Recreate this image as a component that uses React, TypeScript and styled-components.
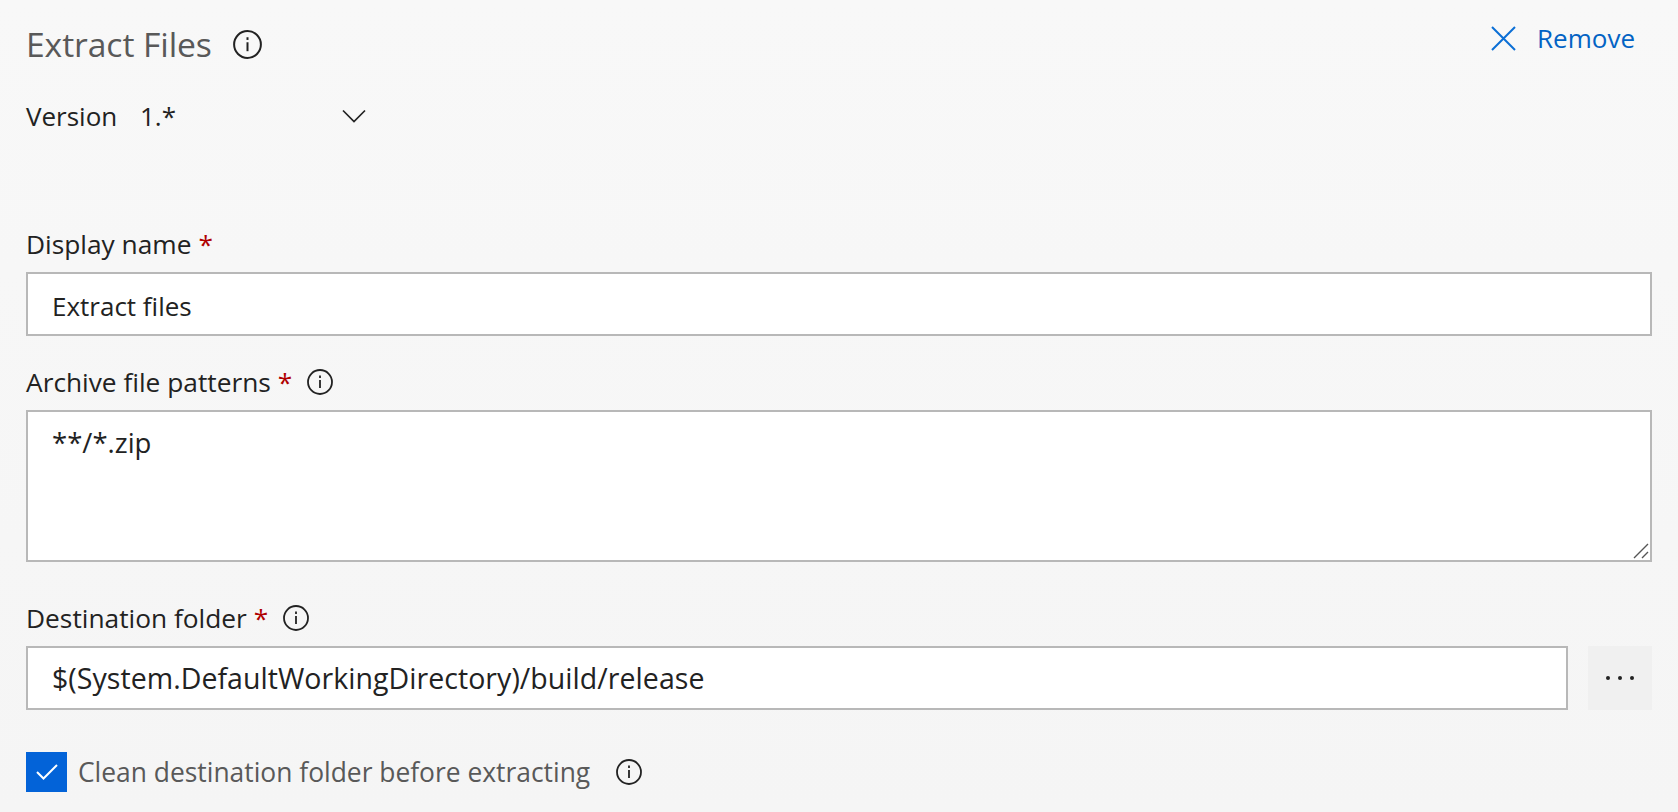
import styled, { createGlobalStyle } from 'styled-components'

const GlobalStyle = createGlobalStyle`
  html, body {
    margin: 0;
    padding: 0;
    background: #f6f6f6;
  }
  * {
    box-sizing: border-box;
  }
`

const Page = styled.div`
  width: 1678px;
  height: 812px;
  padding: 0 26px;
  overflow: hidden;
  background: linear-gradient(#f8f8f8, #f5f5f5);
  font-family: "Open Sans", "Noto Sans", sans-serif;
  color: #222;
`

const Header = styled.div`
  display: flex;
  justify-content: space-between;
  align-items: flex-start;
  height: 82px;
  padding-top: 22px;
`

const TitleRow = styled.div`
  display: flex;
  align-items: center;
  gap: 21px;
`

const Title = styled.h1`
  margin: 0;
  font-size: 33.7px;
  line-height: 44px;
  font-weight: 400;
  letter-spacing: -0.1px;
  color: #595959;
`

const RemoveButton = styled.a`
  display: flex;
  align-items: center;
  gap: 21px;
  margin: -2px 17px 0 0;
  font-size: 26px;
  line-height: 36px;
  color: #0363c4;
`

const VersionRow = styled.div`
  display: flex;
  align-items: center;
  height: 70px;
  padding-bottom: 2px;
  font-size: 26px;
`

const VersionLabel = styled.span`
  width: 114px;
`

const VersionValue = styled.span`
  width: 202px;
`

const Field = styled.div<{ $top: number }>`
  display: flex;
  flex-direction: column;
  margin-top: ${(p) => p.$top}px;
`

const Label = styled.label`
  display: flex;
  align-items: center;
  height: 48px;
  padding-bottom: 9px;
  font-size: 26.3px;
  color: #222;
`

const Required = styled.span`
  margin-left: 7px;
  color: #b00000;
`

const InputBox = styled.div<{ $size: number; $spacing?: number; $shift?: number }>`
  flex: 1 0 64px;
  height: 64px;
  padding: ${(p) => p.$shift ?? 0}px 24px 0;
  display: flex;
  align-items: center;
  background: #fff;
  border: 2px solid #b8b8b8;
  font-size: ${(p) => p.$size}px;
  letter-spacing: ${(p) => p.$spacing ?? 0}px;
`

const TextArea = styled(InputBox)`
  position: relative;
  flex: 0 0 152px;
  height: 152px;
  align-items: flex-start;
  padding-top: 12px;
`

const Grip = styled.svg`
  position: absolute;
  right: 1px;
  bottom: 1px;
`

const InputRow = styled.div`
  display: flex;
  gap: 20px;
`

const MoreButton = styled.div`
  width: 64px;
  height: 64px;
  display: flex;
  align-items: center;
  justify-content: center;
  background: #f0f0f0;
`

const CheckRow = styled.div`
  display: flex;
  align-items: center;
  margin-top: 42px;
  font-size: 26.4px;
  color: #595959;
`

const CheckBox = styled.div`
  width: 41px;
  height: 40px;
  display: flex;
  align-items: center;
  justify-content: center;
  margin-right: 11px;
  background: #0363d8;
`

const InfoWrap = styled.span<{ $left: number }>`
  display: inline-flex;
  margin-left: ${(p) => p.$left}px;
`

const Info = ({ size = 26, left = 0 }: { size?: number; left?: number }) => (
  <InfoWrap $left={left}>
    <svg width={size} height={size} viewBox="0 0 26 26" fill="none" stroke="#222" strokeWidth="1.8">
      <circle cx="13" cy="13" r="12" />
      <path d="M13 11v8" />
      <path d="M13 6.5v2.4" />
    </svg>
  </InfoWrap>
)

export default function App() {
  return (
    <Page>
      <GlobalStyle />
      <Header>
        <TitleRow>
          <Title>Extract Files</Title>
          <Info size={29} />
        </TitleRow>
        <RemoveButton>
          <svg width="25" height="25" viewBox="0 0 25 25" fill="none" stroke="#0b6fd6" strokeWidth="2">
            <path d="M1 1l23 23M24 1L1 24" />
          </svg>
          Remove
        </RemoveButton>
      </Header>
      <VersionRow>
        <VersionLabel>Version</VersionLabel>
        <VersionValue>1.*</VersionValue>
        <svg width="24" height="14" viewBox="0 0 24 14" fill="none" stroke="#222" strokeWidth="1.7">
          <path d="M1 1.5L12 12.5 23 1.5" />
        </svg>
      </VersionRow>
      <Field $top={72}>
        <Label>
          Display name<Required>*</Required>
        </Label>
        <InputBox $size={26} $shift={4}>Extract files</InputBox>
      </Field>
      <Field $top={26}>
        <Label>
          Archive file patterns<Required>*</Required>
          <Info left={15} />
        </Label>
        <TextArea $size={27.5}>
          **/*.zip
          <Grip width="16" height="16" viewBox="0 0 16 16" fill="none" stroke="#555" strokeWidth="1.4">
            <path d="M1 15L15 1M9 15l6-6" />
          </Grip>
        </TextArea>
      </Field>
      <Field $top={36}>
        <Label>
          Destination folder<Required>*</Required>
          <Info left={15} />
        </Label>
        <InputRow>
          <InputBox $size={28.5} $spacing={0.05}>$(System.DefaultWorkingDirectory)/build/release</InputBox>
          <MoreButton>
            <svg width="28" height="6" viewBox="0 0 28 6" fill="#222">
              <circle cx="2" cy="3" r="2" />
              <circle cx="14" cy="3" r="2" />
              <circle cx="26" cy="3" r="2" />
            </svg>
          </MoreButton>
        </InputRow>
      </Field>
      <CheckRow>
        <CheckBox>
          <svg width="22" height="16" viewBox="0 0 22 16" fill="none" stroke="#fff" strokeWidth="2">
            <path d="M1 8l6.5 6.5L21 1" />
          </svg>
        </CheckBox>
        Clean destination folder before extracting
        <Info left={26} />
      </CheckRow>
    </Page>
  )
}
